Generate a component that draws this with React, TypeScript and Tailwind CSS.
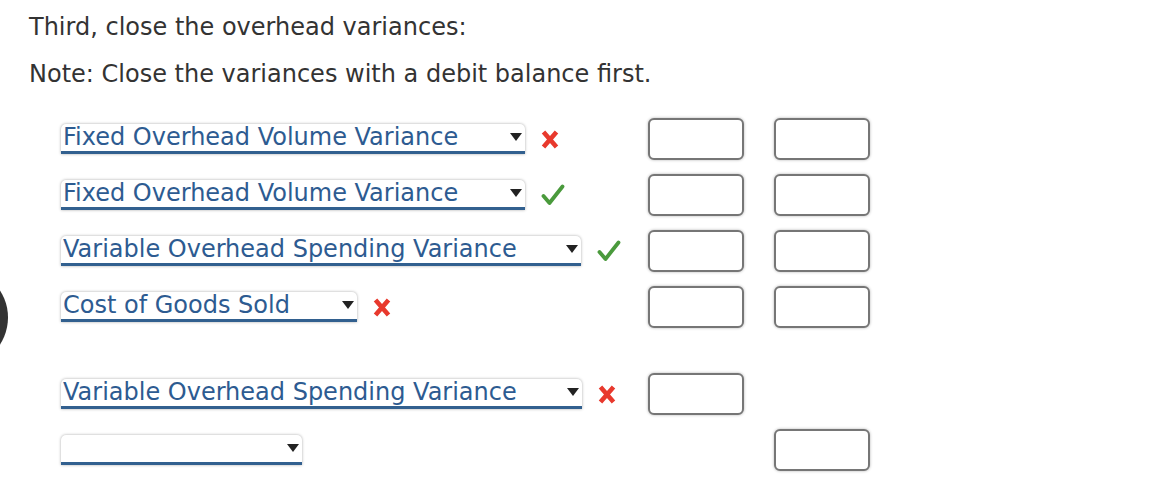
import React from 'react';

type Mark = 'x' | 'check' | null;

const rows: { label: string; width: number; mark: Mark; inputs: [boolean, boolean]; extraTop?: boolean }[] = [
  { label: 'Fixed Overhead Volume Variance', width: 464, mark: 'x', inputs: [true, true] },
  { label: 'Fixed Overhead Volume Variance', width: 464, mark: 'check', inputs: [true, true] },
  { label: 'Variable Overhead Spending Variance', width: 520, mark: 'check', inputs: [true, true] },
  { label: 'Cost of Goods Sold', width: 296, mark: 'x', inputs: [true, true] },
  { label: 'Variable Overhead Spending Variance', width: 521, mark: 'x', inputs: [true, false], extraTop: true },
  { label: '', width: 241, mark: null, inputs: [false, true] },
];

const Cross = () => (
  <svg width="18" height="19" viewBox="0 0 18 19" className="shrink-0">
    <path d="M2.5 2 L15.5 17 M15.5 2 L2.5 17" stroke="#e8392d" strokeWidth="4.6" strokeLinecap="butt" fill="none" />
  </svg>
);

const Check = () => (
  <svg width="24" height="22" viewBox="0 0 24 22" className="shrink-0">
    <path d="M2.5 12 L8.5 19 L21.5 2.5" stroke="#4a9a3c" strokeWidth="3.8" strokeLinejoin="round" strokeLinecap="round" fill="none" />
  </svg>
);

const Dropdown: React.FC<{ label: string; width: number }> = ({ label, width }) => (
  <div
    style={{ width }}
    className="h-[30px] bg-white rounded-t-[5px] shadow-[0_0_3px_rgba(0,0,0,0.35)] border-b-[3px] border-[#32608f] flex items-end justify-between pl-[2px] pr-[3px] shrink-0"
  >
    <span className="text-[24px] leading-[27px] text-[#2d5b91] whitespace-nowrap">{label}</span>
    <svg width="12" height="8" viewBox="0 0 12 8" className="mb-[10px]">
      <path d="M0 0 L12 0 L6 8 Z" fill="#222" />
    </svg>
  </div>
);

const Box = () => (
  <div className="w-[96px] h-[42px] bg-white border-2 border-[#767676] rounded-[6px] shadow-[0_0_3px_rgba(0,0,0,0.3)]" />
);

export default function App() {
  return (
    <div className="relative w-[1170px] h-[484px] bg-white overflow-hidden" style={{ fontFamily: '"DejaVu Sans", Verdana, sans-serif' }}>
      {/* dark circle peeking in at the left edge */}
      <div className="absolute left-[-91px] top-[268px] w-[99px] h-[99px] rounded-full bg-[#333]" />

      <div className="pl-[29px] pt-[13px] text-[#333] text-[24px] leading-[28px]">
        <p>Third, close the overhead variances:</p>
        <p className="mt-[19px]">Note: Close the variances with a debit balance first.</p>
      </div>

      <div className="ml-[61px] mt-[30px] grid grid-cols-[557px_96px_96px] gap-x-[30px]">
        {rows.map((r, i) => {
          const top = i > 0 ? (r.extraTop ? 'mt-[45px]' : 'mt-[14px]') : '';
          return (
            <div key={i} className="contents">
              <div className={`flex items-center gap-[16px] h-[42px] ${top}`}>
                <Dropdown label={r.label} width={r.width} />
                {r.mark === 'x' && <Cross />}
                {r.mark === 'check' && <Check />}
              </div>
              <div className={top}>{r.inputs[0] && <Box />}</div>
              <div className={top}>{r.inputs[1] && <Box />}</div>
            </div>
          );
        })}
      </div>
    </div>
  );
}
